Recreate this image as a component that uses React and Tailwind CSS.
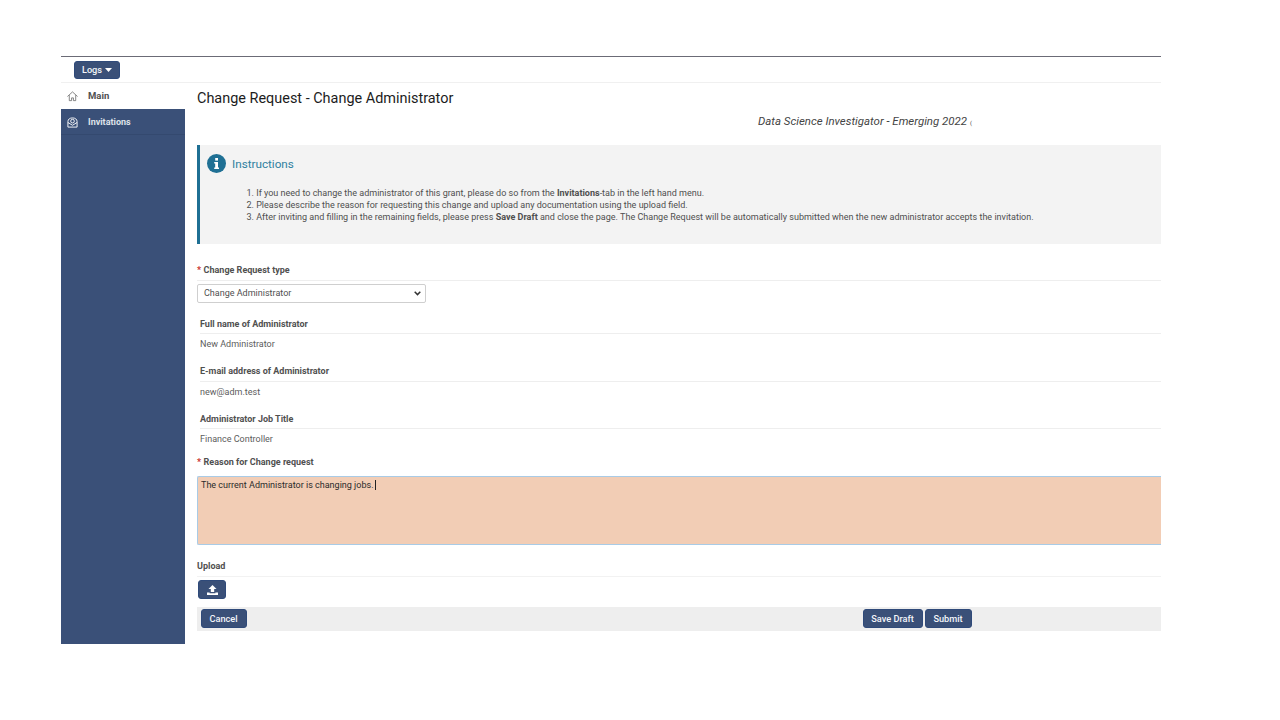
import React from "react";

const Btn = ({ children, className = "" }) => (
  <button className={`h-[19px] rounded-[3px] border border-[#2f4a7a] bg-[#3a5078] text-[9.2px] font-medium text-[#f4f6fa] flex items-center justify-center ${className}`}>
    {children}
  </button>
);

const Field = ({ label, value }) => (
  <div className="h-[47.5px] pl-[3px]">
    <div className="h-[20px] pt-px flex items-center border-b border-[#eeeeee] text-[9px] font-bold text-[#505050] leading-none">{label}</div>
    <div className="h-[20px] pt-[2px] flex items-center text-[9px] text-[#5c5c5c]">{value}</div>
  </div>
);

const Label = ({ children, required }) => (
  <div className="h-[20px] flex items-center border-b border-[#eeeeee] text-[9px] font-bold text-[#505050]">
    {required && <span className="text-[#c9302c] mr-[2.5px]">*</span>}
    {children}
  </div>
);

export default function App() {
  return (
    <div className="h-[720px] w-[1280px] overflow-hidden bg-white pl-[61px] pt-[56px] font-['Roboto',sans-serif]">
      <div className="w-[1100px] border-t border-[#6b6b76]">
        <div className="h-[26px] border-b border-[#f0f0f0] pl-[13px] pt-[4px]">
          <Btn className="!h-[18px] w-[46px] gap-[3px]">
            Logs
            <svg width="7" height="4" viewBox="0 0 7 4"><path d="M0 0h7L3.5 4z" fill="#fff" /></svg>
          </Btn>
        </div>
        <div className="flex h-[561px]">
          <aside className="w-[123.5px] shrink-0 bg-[#3a5078]">
            <div className="h-[26px] bg-white flex items-center text-[9.5px] font-bold text-[#505050]">
              <svg className="ml-[6px] mr-[10px]" width="11" height="11" viewBox="0 0 24 24" fill="none" stroke="#666" strokeWidth="1.7">
                <path d="M1 12 12 2l11 10" />
                <path d="M5 9v12h5v-6h4v6h5V9" />
              </svg>
              Main
            </div>
            <div className="h-[26px] pt-[2px] flex items-center border-b border-[#34496f] text-[9px] font-bold text-[#dfe3ea]">
              <svg className="ml-[6px] mr-[10px]" width="11" height="11" viewBox="0 0 24 24" fill="none" stroke="#fff" strokeWidth="2">
                <path d="M2 10c0-5 4-8 10-8s10 3 10 8v12H2z" />
                <path d="M2 12l10 6 10-6" />
                <circle cx="12" cy="9" r="4" />
              </svg>
              Invitations
            </div>
          </aside>
          <main className="flex-1 min-w-0 overflow-hidden pl-[12.5px]">
            <h1 className="h-[30px] pt-[2px] flex items-center text-[14.45px] font-normal text-[#1c1c1c]">Change Request - Change Administrator</h1>
            <div className="h-[16px] pt-[2px] flex items-center pl-[561px] text-[11.45px] italic text-[#444444] whitespace-nowrap">
              Data Science Investigator - Emerging 2022 <span className="ml-[3px] text-[6px] not-italic">(</span>
            </div>
            <section className="mt-[16px] h-[99px] border-l-[3px] border-[#1f7094] bg-[#f3f3f3]">
              <div className="flex items-center pl-[7px] pt-[9px]">
                <span className="flex h-[19px] w-[19px] items-center justify-center rounded-full bg-[#1f7094]">
                  <svg width="5" height="11" viewBox="0 0 5 11" fill="#fff">
                    <rect x="1.2" y="0" width="2.8" height="2.6" />
                    <path d="M0.2 4h3.8v5.6h1V11H0.2V9.6h1V5.4h-1z" />
                  </svg>
                </span>
                <span className="ml-[6px] pt-[2px] text-[11.7px] text-[#2f7f9f]">Instructions</span>
              </div>
              <ol className="mt-[13px] pl-[46.5px] text-[9.03px] leading-[12px] text-[#4f4f4f] whitespace-nowrap">
                <li>1. If you need to change the administrator of this grant, please do so from the <b className="font-bold">Invitations</b>-tab in the left hand menu.</li>
                <li>2. Please describe the reason for requesting this change and upload any documentation using the upload field.</li>
                <li>3. After inviting and filling in the remaining fields, please press <b className="font-bold">Save Draft</b> and close the page. The Change Request will be automatically submitted when the new administrator accepts the invitation.</li>
              </ol>
            </section>
            <div className="mt-[17px]"><Label required>Change Request type</Label></div>
            <div className="mt-[3px] flex h-[19px] w-[229px] items-center justify-between rounded-[2px] border border-[#cfcfcf] bg-white pl-[6px] pr-[4px] text-[9px] text-[#4f4f4f]">
              Change Administrator
              <svg width="7" height="5" viewBox="0 0 7 5" fill="none" stroke="#333" strokeWidth="1.5"><path d="M.7.8 3.5 3.6 6.3.8" /></svg>
            </div>
            <div className="mt-[11px]">
              <Field label="Full name of Administrator" value="New Administrator" />
              <Field label="E-mail address of Administrator" value="new@adm.test" />
              <Field label="Administrator Job Title" value="Finance Controller" />
            </div>
            <div className="flex h-[20px] items-center text-[9px] font-bold text-[#505050] -mt-[3.5px]">
              <span className="text-[#c9302c] mr-[2.5px]">*</span>Reason for Change request
            </div>
            <div className="mt-[3px] h-[69px] rounded-l-[2px] border border-r-0 border-[#a9cbe6] bg-[#f2cdb5] pl-[3px] pt-[1.5px] text-[9.03px] leading-[12px] text-[#2b2b2b]">
              The current Administrator is changing jobs.<span className="ml-px inline-block h-[10px] w-px bg-[#222] align-middle" />
            </div>
            <div className="mt-[12px] h-[20px] pt-px flex items-center border-b border-[#f2f2f2] text-[9px] font-bold text-[#505050]">Upload</div>
            <Btn className="ml-px mt-[3px] w-[28px]">
              <svg width="11" height="10" viewBox="0 0 11 10" fill="#fff"><path d="M5.5 0 9.5 4H7.2v3H3.8V4H1.5zM0 7.6h2.6v.6h5.8v-.6H11V10H0z" /></svg>
            </Btn>
            <div className="mt-[7.5px] flex h-[24px] items-center bg-[#eeeeee] pl-[3.5px]">
              <Btn className="w-[46px]">Cancel</Btn>
              <Btn className="ml-[616px] w-[60px]">Save Draft</Btn>
              <Btn className="ml-[2px] w-[47px]">Submit</Btn>
            </div>
          </main>
        </div>
      </div>
    </div>
  );
}
